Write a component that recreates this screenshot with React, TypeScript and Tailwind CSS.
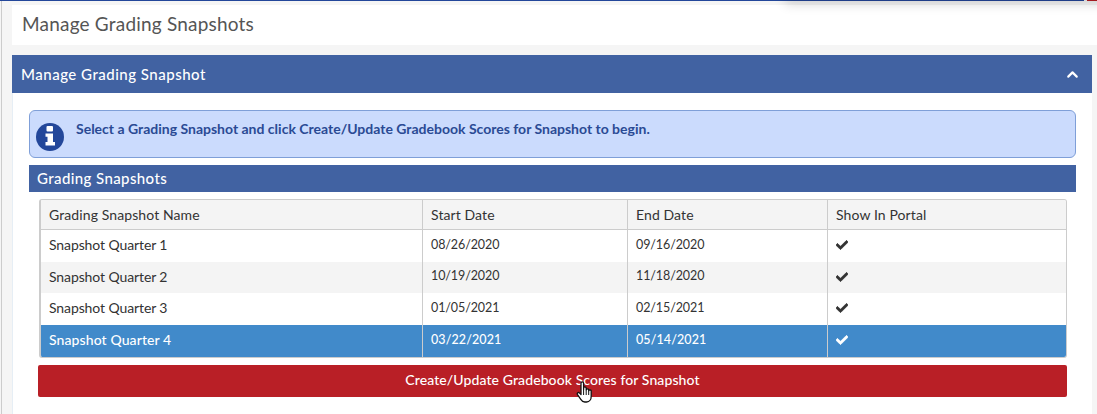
import React from 'react';
import { ChevronUp } from 'lucide-react';
import { FaCheck } from 'react-icons/fa';

const snapshots = [
  { name: 'Snapshot Quarter 1', start: '08/26/2020', end: '09/16/2020', rowClass: 'bg-white h-[32px] tracking-[-0.1px]' },
  { name: 'Snapshot Quarter 2', start: '10/19/2020', end: '11/18/2020', rowClass: 'bg-[#f4f4f4] h-[31px] tracking-[-0.1px]' },
  { name: 'Snapshot Quarter 3', start: '01/05/2021', end: '02/15/2021', rowClass: 'bg-white h-[32px] tracking-[-0.1px]' },
  { name: 'Snapshot Quarter 4', start: '03/22/2021', end: '05/14/2021', rowClass: 'bg-[#418aca] text-white font-medium h-[32px]' },
];

const colClass = 'grid grid-cols-[382px_205px_200px_1fr]';
const cellClass = 'flex items-center pl-[8px] border-r-[1px] border-[#cccccc] last:border-r-0';

const InfoIcon = () => (
  <svg viewBox="0 0 28 28" className="mt-[6px] h-[28px] w-[28px] shrink-0">
    <circle cx="14" cy="14" r="14" fill="#23479a" />
    <rect x="10.500" y="3" width="6.500" height="5.500" rx="1" fill="#ffffff" />
    <path d="M9.500 10.500h7.500v8.500h2v3.500H9.500V19h2v-5.200h-2z" fill="#ffffff" />
  </svg>
);

const HandCursor = () => (
  <svg viewBox="0 0 18 24" className="absolute left-[576px] top-[15px] h-[24px] w-[18px]">
    <path
      d="M5 11V3.2a1.3 1.3 0 0 1 2.6 0V9.5V8.2a1.3 1.3 0 0 1 2.6 0v1.6a1.3 1.3 0 0 1 2.5 0v1a1.3 1.3 0 0 1 2.5 0v5.4c0 3-1.6 5.8-4.6 5.8H8.8c-2 0-3.100-1.100-4-2.600L1.500 14.600c-.9-1.500.9-2.800 2.100-1.500L5 14.500z"
      fill="#ffffff"
      stroke="#111111"
      strokeWidth="1.300"
      strokeLinejoin="round"
    />
    <path d="M7.600 10v5M10.200 10v5M12.700 11v4" stroke="#111111" strokeWidth="1" />
  </svg>
);

const App: React.FC = () => {
  return (
    <div className="relative h-[414px] w-[1097px] overflow-hidden bg-[#f5f5f5] font-['Lato',sans-serif] text-[#333333]">
      <div className="h-[1px] w-[1084px] bg-[#23479a]" />
      <div className="absolute right-0 top-0 h-[1px] w-[10px] bg-[#b91f26]" />

      <div className="ml-[1px] h-[413px] border-l-[1px] border-[#cccccc] pl-[10px] pt-[4px]">
        <div className="flex h-[40px] items-center bg-white pb-[2px] pl-[10px] text-[19px] tracking-[0.2px] text-[#555555]">
          Manage Grading Snapshots
        </div>

        <div className="mt-[10px] w-[1080px]">
          <div className="flex h-[38px] items-center justify-between bg-[#4162a2] pl-[9px] pr-[11px] text-[15px] font-medium tracking-[0.5px] text-white">
            <span>Manage Grading Snapshot</span>
            <ChevronUp className="h-[17px] w-[17px]" strokeWidth={3} />
          </div>

          <div className="h-[321px] border-l-[1px] border-[#e6eef5] bg-white pl-[16px] pr-[16px] pt-[17px]">
            <div className="flex h-[48px] items-center rounded-[6px] border-[1px] border-[#7f9fd8] bg-[#cbdbfd] pl-[6px] text-[14px] font-bold text-[#2a4a94]">
              <InfoIcon />
              <span className="mb-[11px] ml-[12px]">
                Select a Grading Snapshot and click Create/Update Gradebook Scores for Snapshot to begin.
              </span>
            </div>

            <div className="mt-[7px] flex h-[27px] items-center bg-[#4162a2] pl-[8px] text-[15px] font-medium tracking-[0.4px] text-white">
              Grading Snapshots
            </div>

            <div className="ml-[10px] mr-[9px] mt-[7px] overflow-hidden rounded-[3px] border-[1px] border-l-[2px] border-[#cccccc] text-[14px] tracking-[0.1px]">
              <div className={`${colClass} h-[30px] border-b-[1px] border-[#cccccc] bg-[#f4f4f4]`}>
                <div className={cellClass}>Grading Snapshot Name</div>
                <div className={cellClass}>Start Date</div>
                <div className={cellClass}>End Date</div>
                <div className={cellClass}>Show In Portal</div>
              </div>
              {snapshots.map(s => (
                <div key={s.name} className={`${colClass} ${s.rowClass}`}>
                  <div className={`${cellClass} pb-[3px]`}>{s.name}</div>
                  <div className={`${cellClass} pb-[2px] text-[12.5px]`}>{s.start}</div>
                  <div className={`${cellClass} pb-[2px] text-[12.5px]`}>{s.end}</div>
                  <div className={`${cellClass} pb-[2px]`}>
                    <FaCheck className="h-[12px] w-[12px]" stroke="currentColor" strokeWidth={30} />
                  </div>
                </div>
              ))}
            </div>

            <div className="relative ml-[9px] mr-[9px] mt-[7px]">
              <button className="flex h-[32px] w-full items-center justify-center rounded-[2px] bg-[#b91f26] pb-[3px] text-[14px] font-medium tracking-[0.1px] text-white">
                Create/Update Gradebook Scores for Snapshot
              </button>
            </div>
          </div>
        </div>
      </div>

      {/* shadow of the dropdown above the page */}
      <div className="absolute left-[785px] top-[-30px] h-[30px] w-[340px] shadow-[0_4px_12px_rgba(0,0,0,0.16)]" />

      <div className="absolute left-0 top-[365px] h-0 w-0">
        <HandCursor />
      </div>
    </div>
  );
};

export default App;
